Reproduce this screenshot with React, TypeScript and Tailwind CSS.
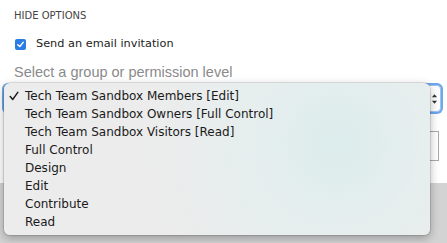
import React from "react";

const options = [
  "Tech Team Sandbox Members [Edit]",
  "Tech Team Sandbox Owners [Full Control]",
  "Tech Team Sandbox Visitors [Read]",
  "Full Control",
  "Design",
  "Edit",
  "Contribute",
  "Read",
];

export default function App() {
  return (
    <div className="relative h-[243px] w-[447px] overflow-hidden bg-[#d3d3d3] font-['DejaVu_Sans',sans-serif]">
      <div className="h-[183px] bg-white pl-[14px] pr-[6px] pt-[9px]">
        <div className="text-[10px] leading-[13px] text-[#444]">HIDE OPTIONS</div>
        <label className="mt-[15px] flex items-center gap-[10px] pl-px">
          <span className="flex h-[11px] w-[11px] items-center justify-center rounded-[2px] bg-[#2c7ce5]">
            <svg viewBox="0 0 10 10" className="h-[9px] w-[9px]">
              <path d="M2 5.2 L4.2 7.3 L8 2.6" fill="none" stroke="white" strokeWidth="1.6" strokeLinecap="round" strokeLinejoin="round" />
            </svg>
          </span>
          <span className="text-[11.3px] leading-[14px] text-[#222]">Send an email invitation</span>
        </label>
        <div className="mt-[13px] font-['Liberation_Sans',sans-serif] text-[14.5px] leading-[17px] text-[#8a8a8a]">
          Select a group or permission level
        </div>
        <div className="mt-[4px] ml-[-10px] flex h-[27px] items-center justify-end rounded-[4px] border border-[#9fc4f0] bg-white shadow-[0_0_0_2px_#6ea8ec]">
          <svg viewBox="0 0 8 14" className="mr-[2px] h-[12px] w-[7px]">
            <path d="M1 5 L4 1.5 L7 5 Z M1 9 L4 12.5 L7 9 Z" fill="#333" />
          </svg>
        </div>
        <div className="mt-[19px] mr-[2px] ml-[-10px] h-[30px] border border-[#aaa]" />
      </div>

      <div className="absolute left-[4px] top-[83px] w-[426px] rounded-[6px] bg-[radial-gradient(circle_at_78%_40%,#dcecec_0%,#e6eeee_25%,#ececec_55%)] py-[4px] shadow-[0_3px_10px_rgba(0,0,0,0.3)] ring-1 ring-black/10">
        {options.map((o, i) => (
          <div key={o} className="flex h-[18px] items-center text-[12px] text-[#1a1a1a]">
            <span className="flex w-[21px] pl-[5px]">
              {i === 0 && (
                <svg viewBox="0 0 10 10" className="h-[10px] w-[10px]">
                  <path d="M1.2 5.6 L3.8 8.4 L8.8 1.4" fill="none" stroke="#1a1a1a" strokeWidth="1.5" strokeLinecap="round" strokeLinejoin="round" />
                </svg>
              )}
            </span>
            <span>{o}</span>
          </div>
        ))}
      </div>
    </div>
  );
}
